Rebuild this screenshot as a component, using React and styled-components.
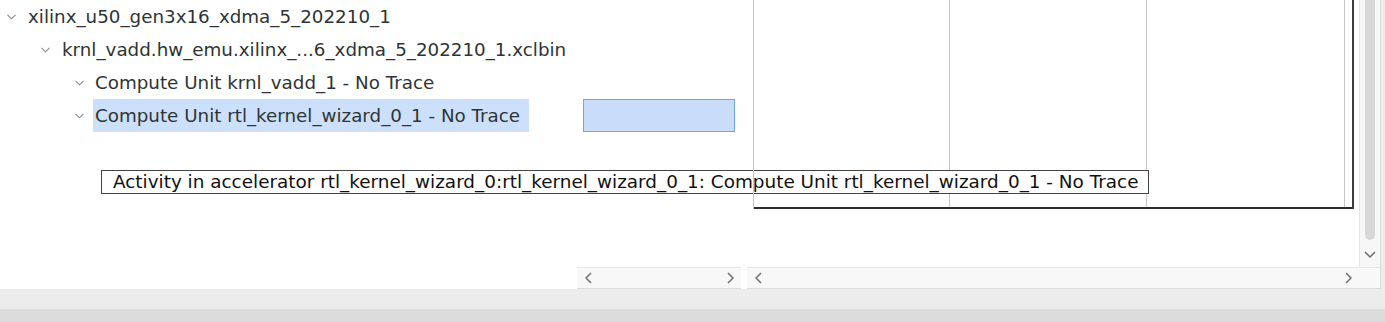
import styled, { createGlobalStyle } from "styled-components";

const Global = createGlobalStyle`
  html, body { margin: 0; padding: 0; background: #fff; }
  body { font-family: "DejaVu Sans", sans-serif; }
`;

const Window = styled.div`
  width: 1385px;
  height: 322px;
  display: flex;
  flex-direction: column;
  overflow: hidden;
  background: #fff;
`;

const Main = styled.div`
  position: relative;
  height: 289px;
  display: flex;
  flex-direction: row;
`;

const TreePane = styled.div`
  width: 577px;
  display: flex;
  flex-direction: column;
  background: #fff;
`;

const Row = styled.div`
  height: 33px;
  display: flex;
  align-items: center;
  padding-left: ${p => 7 + p.level * 34}px;
`;

const Caret = styled.span`
  width: 9px;
  height: 33px;
  display: flex;
  align-items: center;
  margin-right: ${p => (p.level === 2 ? 11 : 12)}px;
`;

const Label = styled.span`
  font-family: "DejaVu Sans", "Noto Sans", sans-serif;
  font-size: 18.3px;
  color: #2e3436;
  white-space: nowrap;
  height: 33px;
  line-height: 33px;
  padding: ${p => (p.selected ? "0 9px 0 2px" : "0")};
  margin-left: ${p => (p.selected ? "-2px" : "0")};
  background: ${p => (p.selected ? "#cde0fb" : "transparent")};
`;

const MidPane = styled.div`
  width: 164px;
  display: flex;
  flex-direction: column;
`;

const MidBody = styled.div`
  flex: 1;
  padding: 99px 0 0 6px;
`;

const Swatch = styled.div`
  width: 150px;
  height: 31px;
  background: #c9ddfb;
  border: 1px solid #6ea6ea;
`;

const Gutter = styled.div`
  width: 6px;
  background: #fff;
`;

const ChartPane = styled.div`
  width: 633px;
  display: grid;
  grid-template-columns: 612px 21px;
  grid-template-rows: 267px 22px;
`;

const ChartArea = styled.div`
  padding-left: 6px;
  background: #fff;
`;

const Frame = styled.div`
  position: relative;
  width: 601px;
  height: 209px;
  box-sizing: border-box;
  display: grid;
  grid-template-columns: 196px 197px 198px 8px;
  border-right: 2px solid #3c3c3c;
  border-bottom: 2px solid #2c2c2c;

  &::before {
    content: "";
    position: absolute;
    left: 0;
    top: 0;
    bottom: -2px;
    width: 1px;
    background: #c4c4c4;
    z-index: 2;
  }
`;

const Lane = styled.div`
  border-left: 1px solid ${p => (p.first ? "transparent" : "#c8c8c8")};
`;

const VScroll = styled.div`
  background: #f7f7f7;
  border-left: 1px solid #e4e4e4;
  display: flex;
  flex-direction: column;
  align-items: center;
`;

const Thumb = styled.div`
  margin-top: -10px;
  width: 10px;
  height: 250px;
  border-radius: 5px;
  background: #d8d8d8;
`;

const Spacer = styled.div`
  flex: 1;
`;

const ArrowBox = styled.div`
  height: ${p => p.h || 22}px;
  width: ${p => p.w || 21}px;
  display: flex;
  align-items: center;
  justify-content: center;
  flex: none;
`;

const HScroll = styled.div`
  display: flex;
  align-items: center;
  justify-content: space-between;
  background: #f8f8f8;
  border-top: 1px solid #e6e6e6;
  border-bottom: 1px solid #dcdcdc;
  box-sizing: border-box;
  height: 22px;
  padding: 0 2px;
`;

const Corner = styled.div`
  background: #f8f8f8;
  border-top: 1px solid #e6e6e6;
  border-bottom: 1px solid #dcdcdc;
`;

const EdgeStrip = styled.div`
  width: 5px;
  background: #ececec;
  border-left: 1px solid #dcdcdc;
  box-sizing: border-box;
`;

const StatusBar = styled.div`
  height: 20px;
  background: #ececec;
`;

const BottomBar = styled.div`
  height: 13px;
  background: #dcdcdc;
`;

const Tooltip = styled.div`
  position: absolute;
  left: 101px;
  top: 170px;
  width: 1048px;
  height: 24px;
  box-sizing: border-box;
  border: 1px solid #444;
  background: #fff;
  padding-left: 11px;
  font-family: "DejaVu Sans", sans-serif;
  font-size: 18.4px;
  line-height: 22px;
  color: #111;
  white-space: nowrap;
  overflow: hidden;
  z-index: 1;
`;

const Chevron = ({ dir, color = "#6e6e6e" }) => {
  const pts = {
    down: "1,1 6,6 11,1",
    left: "6,1 1,6 6,11",
    right: "1,1 6,6 1,11",
  }[dir];
  const w = dir === "down" ? 12 : 7;
  const h = dir === "down" ? 7 : 12;
  return (
    <svg width={w} height={h} viewBox={`0 0 ${w} ${h}`}>
      <polyline points={pts} fill="none" stroke={color} strokeWidth="1.5" />
    </svg>
  );
};

const TreeCaret = () => (
  <svg width="9" height="6" viewBox="0 0 9 6">
    <polyline points="0.5,0.8 4.5,4.8 8.5,0.8" fill="none" stroke="#8a8a8a" strokeWidth="1.1" />
  </svg>
);

const rows = [
  { level: 0, text: "xilinx_u50_gen3x16_xdma_5_202210_1" },
  { level: 1, text: "krnl_vadd.hw_emu.xilinx_...6_xdma_5_202210_1.xclbin" },
  { level: 2, text: "Compute Unit krnl_vadd_1 - No Trace" },
  { level: 2, text: "Compute Unit rtl_kernel_wizard_0_1 - No Trace", selected: true },
];

export default function App() {
  return (
    <Window>
      <Global />
      <Main>
        <TreePane>
          {rows.map((r, i) => (
            <Row key={i} level={r.level}>
              <Caret level={r.level}>
                <TreeCaret />
              </Caret>
              <Label selected={r.selected}>{r.text}</Label>
            </Row>
          ))}
        </TreePane>
        <MidPane>
          <MidBody>
            <Swatch />
          </MidBody>
          <HScroll>
            <ArrowBox w={18}><Chevron dir="left" /></ArrowBox>
            <ArrowBox w={18}><Chevron dir="right" /></ArrowBox>
          </HScroll>
        </MidPane>
        <Gutter />
        <ChartPane>
          <ChartArea>
            <Frame>
              <Lane first />
              <Lane />
              <Lane />
              <Lane />
            </Frame>
          </ChartArea>
          <VScroll>
            <Thumb />
            <Spacer />
            <ArrowBox h={26}><Chevron dir="down" /></ArrowBox>
          </VScroll>
          <HScroll>
            <ArrowBox w={18}><Chevron dir="left" /></ArrowBox>
            <ArrowBox w={18}><Chevron dir="right" /></ArrowBox>
          </HScroll>
          <Corner />
        </ChartPane>
        <EdgeStrip />
        <Tooltip>
          Activity in accelerator rtl_kernel_wizard_0:rtl_kernel_wizard_0_1: Compute Unit rtl_kernel_wizard_0_1 - No Trace
        </Tooltip>
      </Main>
      <StatusBar />
      <BottomBar />
    </Window>
  );
}
